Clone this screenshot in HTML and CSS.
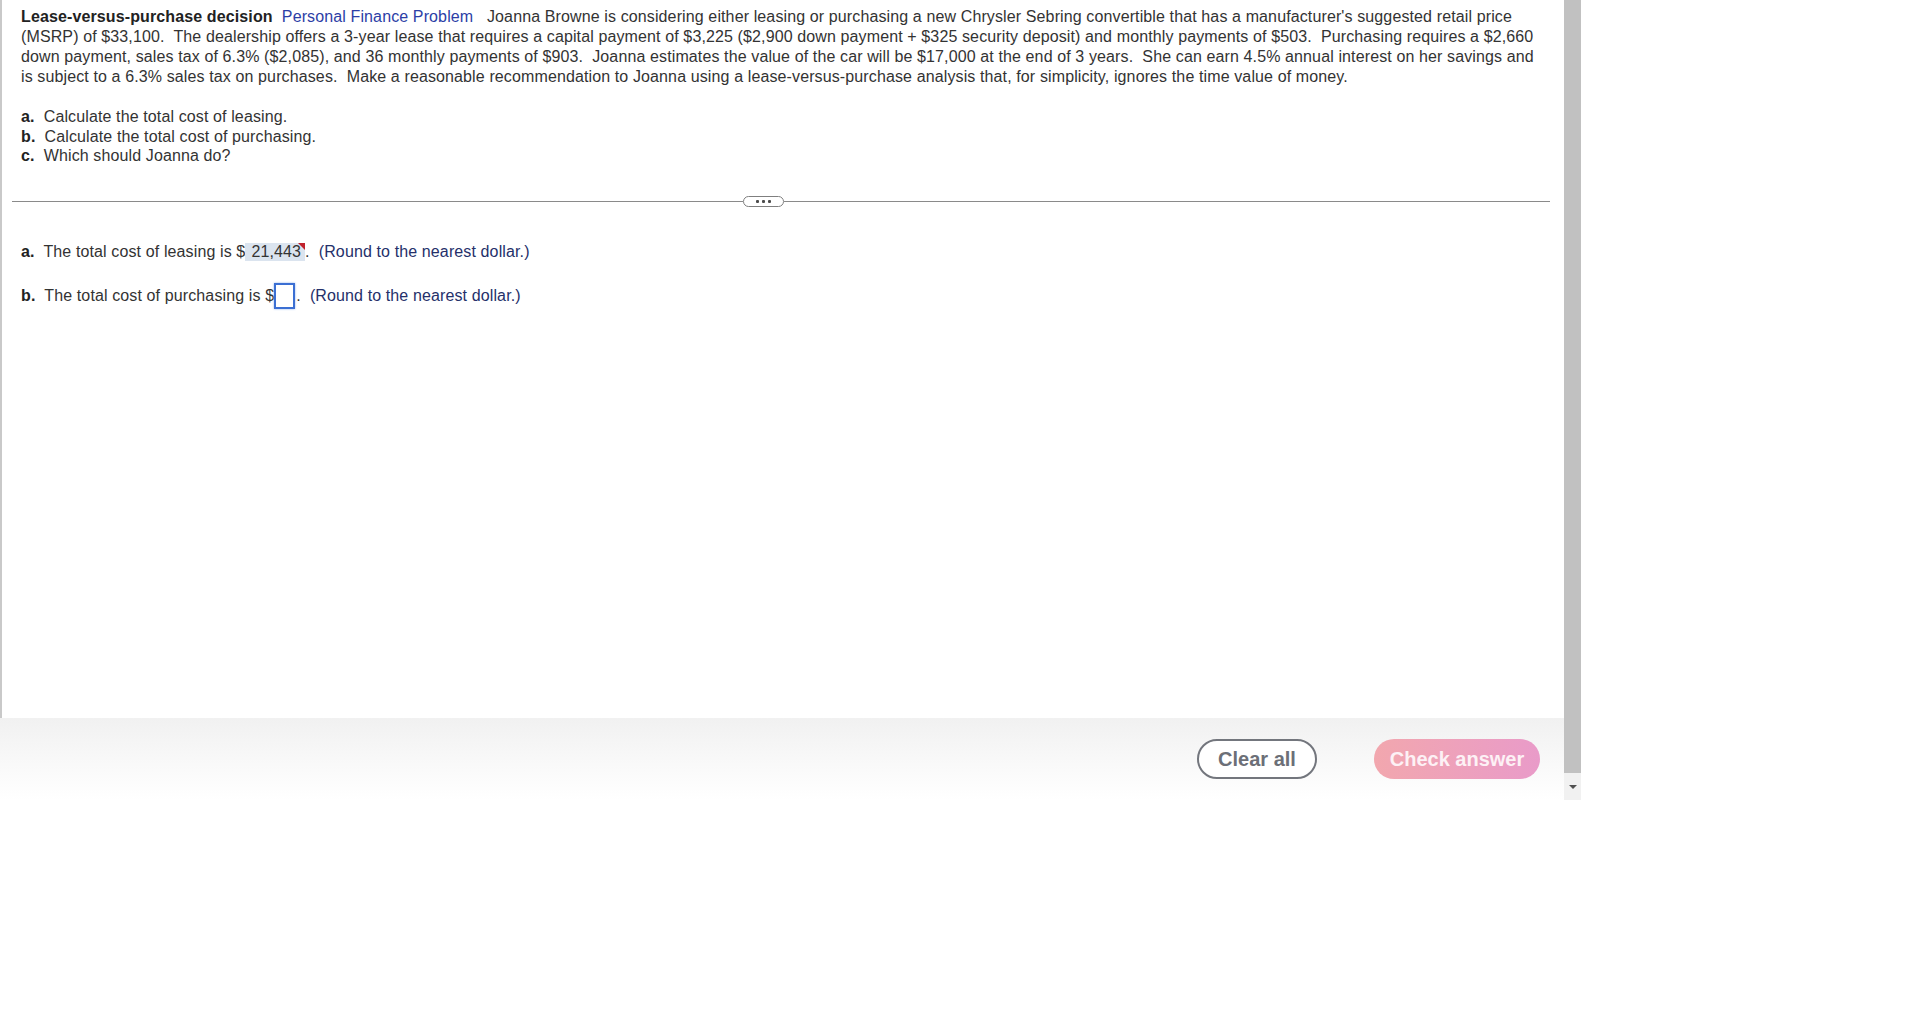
FILE: index.html
```html
<!DOCTYPE html>
<html lang="en">
<head>
<meta charset="utf-8">
<title>Lease-versus-purchase decision</title>
<link rel="stylesheet" href="styles.css">
</head>
<body>
<div class="frame">
  <div class="main">
    <div class="content">
      <p class="problem"><b class="title">Lease-versus-purchase decision</b>&nbsp; <span class="tag">Personal Finance Problem</span>&nbsp;&nbsp; Joanna Browne is considering either leasing or purchasing a new Chrysler Sebring convertible that has a manufacturer's suggested retail price (MSRP) of $33,100.&nbsp; The dealership offers a 3-year lease that requires a capital payment of $3,225 ($2,900 down payment + $325 security deposit) and monthly payments of $503.&nbsp; Purchasing requires a $2,660 down payment, sales tax of 6.3% ($2,085), and 36 monthly payments of $903.&nbsp; Joanna estimates the value of the car will be $17,000 at the end of 3 years.&nbsp; She can earn 4.5% annual interest on her savings and is subject to a 6.3% sales tax on purchases.&nbsp; Make a reasonable recommendation to Joanna using a lease-versus-purchase analysis that, for simplicity, ignores the time value of money.</p>
      <ul class="parts">
        <li><b>a.</b>&nbsp; Calculate the total cost of leasing.</li>
        <li><b>b.</b>&nbsp; Calculate the total cost of purchasing.</li>
        <li><b>c.</b>&nbsp; Which should Joanna do?</li>
      </ul>
      <div class="divider">
        <span class="rule"></span>
        <span class="pill"><i></i><i></i><i></i></span>
        <span class="rule"></span>
      </div>
      <div class="answer answer-a"><b>a.</b>&nbsp; The total cost of leasing is $<span class="filled">21,443</span>.&nbsp; <span class="hint">(Round to the nearest dollar.)</span></div>
      <div class="answer answer-b"><b>b.</b>&nbsp; The total cost of purchasing is $<span class="blank"></span>.&nbsp; <span class="hint">(Round to the nearest dollar.)</span></div>
    </div>
    <div class="footer">
      <button class="btn btn-clear">Clear all</button>
      <button class="btn btn-check">Check answer</button>
    </div>
  </div>
  <div class="scrollbar">
    <div class="thumb"></div>
    <div class="arrow"><span class="tri"></span></div>
  </div>
</div>
</body>
</html>
```
FILE: styles.css
```css
html, body {
  margin: 0;
  padding: 0;
  background: #ffffff;
}
body {
  font-family: "Liberation Sans", Arial, sans-serif;
  font-size: 16px;
  color: #333333;
}
.frame {
  display: flex;
  width: 1582px;
  height: 800px;
}
.main {
  width: 1564px;
  display: flex;
  flex-direction: column;
}
.content {
  flex: 1;
  border-left: 2px solid #c9c9c9;
  padding: 7px 23px 0 19px;
  letter-spacing: 0.12px;
}
.problem {
  margin: 0;
  line-height: 20px;
  width: 1522px;
}
.title {
  color: #222222;
}
.tag {
  color: #2c3ea6;
}
.parts {
  list-style: none;
  margin: 20px 0 0 0;
  padding: 0;
  line-height: 19.5px;
}
.parts b {
  color: #222222;
}
.divider {
  display: grid;
  grid-template-columns: 731px 41px 766px;
  align-items: center;
  margin: 30px 0 0 -9px;
  height: 12px;
}
.rule {
  height: 1px;
  background: #8a8a8a;
}
.pill {
  height: 9px;
  border: 1px solid #7f7f7f;
  border-radius: 6px;
  display: flex;
  justify-content: center;
  align-items: center;
  gap: 3px;
  background: #ffffff;
}
.pill i {
  width: 3px;
  height: 3px;
  background: #4c4c4c;
  border-radius: 1px;
}
.answer {
  line-height: 20px;
  height: 20px;
  display: flex;
  align-items: center;
  white-space: pre;
}
.answer b {
  color: #222222;
}
.answer-a {
  margin-top: 34px;
}
.answer-b {
  margin-top: 24px;
}
.filled {
  position: relative;
  background: #dbe4ef;
  height: 18px;
  line-height: 18px;
  padding: 0 4px 0 6px;
  margin-left: 0;
  color: #333333;
}
.filled::after {
  content: "";
  position: absolute;
  top: 0;
  right: 0;
  border-style: solid;
  border-width: 0 7px 7px 0;
  border-color: transparent #c0222d transparent transparent;
}
.blank {
  display: inline-block;
  width: 17px;
  height: 22px;
  border: 2px solid #3b6fd3;
  box-shadow: 0 0 2px #8fb0ec;
  background: #ffffff;
  margin-right: 1px;
}
.hint {
  color: #25306a;
}
.footer {
  height: 82px;
  background: linear-gradient(#f1f1f1, #ffffff);
  display: flex;
  justify-content: flex-end;
  align-items: center;
  gap: 57px;
  padding-right: 24px;
  box-sizing: border-box;
}
.btn {
  font-family: "Liberation Sans", Arial, sans-serif;
  font-weight: bold;
  font-size: 20px;
  height: 40px;
  border-radius: 20px;
  padding: 0;
  cursor: pointer;
}
.btn-clear {
  width: 120px;
  border: 2px solid #73767d;
  color: #6c6f77;
  background: #ffffff;
}
.btn-check {
  width: 166px;
  border: none;
  color: #fdf1f5;
  background: linear-gradient(90deg, #f2a7ae, #e99bc9);
}
.scrollbar {
  width: 17px;
  display: flex;
  flex-direction: column;
  background: #f1f1f1;
}
.thumb {
  flex: 1;
  background: #c1c1c1;
}
.arrow {
  height: 27px;
  display: flex;
  justify-content: center;
  align-items: center;
}
.tri {
  width: 0;
  height: 0;
  border-left: 4px solid transparent;
  border-right: 4px solid transparent;
  border-top: 4px solid #505050;
}
```
